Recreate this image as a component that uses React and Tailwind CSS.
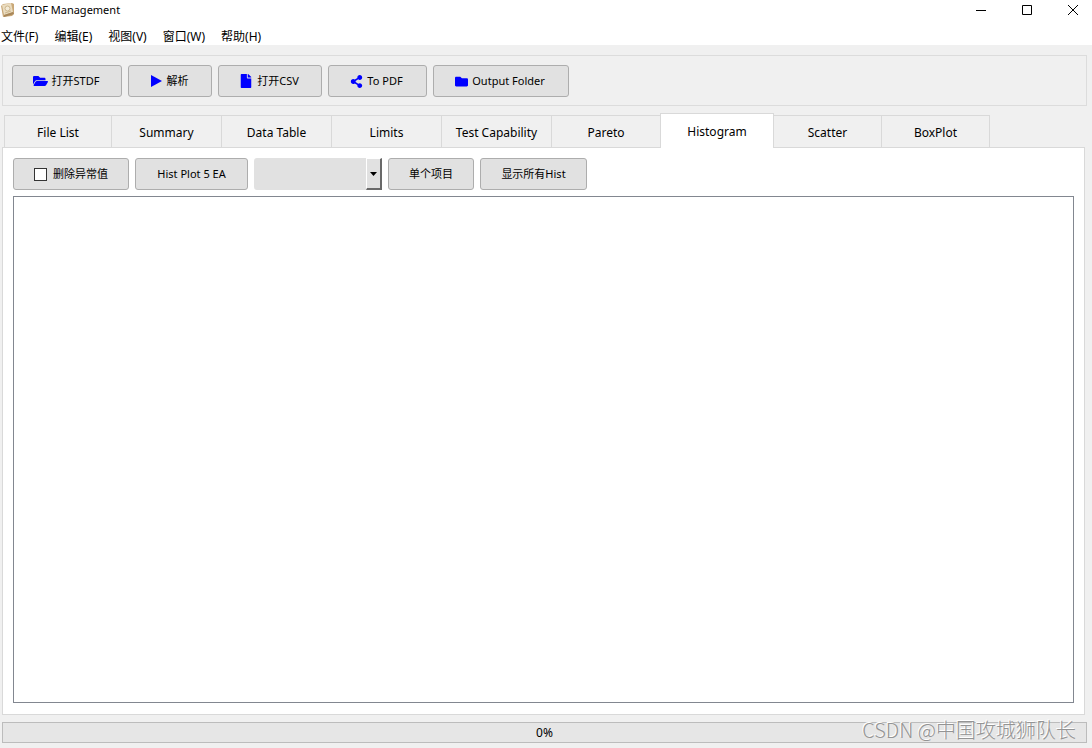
import { useState } from 'react';
import { FaFolderOpen, FaFile, FaShareAlt, FaFolder } from 'react-icons/fa';

const MENUS = ['文件(F)', '编辑(E)', '视图(V)', '窗口(W)', '帮助(H)'];

function PlayIcon({ className }) {
  return (
    <svg viewBox="0 0 13 12" className={className} aria-hidden="true">
      <path d="M1 0 12 6 1 12z" fill="currentColor" />
    </svg>
  );
}

const ACTIONS = [
  { label: '打开STDF', icon: FaFolderOpen, width: 'w-[110px]', size: 'w-[15px] h-[14px]' },
  { label: '解析', icon: PlayIcon, width: 'w-[84px]', size: 'w-[13px] h-3' },
  { label: '打开CSV', icon: FaFile, width: 'w-[104px]', size: 'w-[14px] h-[14px]' },
  { label: 'To PDF', icon: FaShareAlt, width: 'w-[99px]', size: 'w-[13px] h-[13px]' },
  { label: 'Output Folder', icon: FaFolder, width: 'w-[136px]', size: 'w-[13px] h-[13px]' },
];

const TABS = [
  { label: 'File List', width: 'w-[108px]' },
  { label: 'Summary', width: 'w-[110px]' },
  { label: 'Data Table', width: 'w-[110px]' },
  { label: 'Limits', width: 'w-[110px]' },
  { label: 'Test Capability', width: 'w-[110px]' },
  { label: 'Pareto', width: 'w-[108px]' },
  { label: 'Histogram', width: 'w-[114px]' },
  { label: 'Scatter', width: 'w-[108px]' },
  { label: 'BoxPlot', width: 'w-[108px]' },
];

const BUTTON = 'flex h-8 shrink-0 items-center justify-center whitespace-nowrap rounded-[3px] border border-[#adadad] bg-[#e1e1e1] text-[11px]';

function AppIcon() {
  return (
    <svg viewBox="0 0 16 16" className="h-4 w-4" aria-hidden="true">
      <path d="M3 15 1 4l2-2 9-1 2 1v10l-2 2z" fill="#c9a878" />
      <path d="M2 3 11 1l2 9-9 3z" fill="#eadcc0" />
      <path d="m4 13 9-3 1 2-10 3z" fill="#a8875a" />
      <circle cx="7.500" cy="6.500" r="2.500" fill="#f3ead6" stroke="#cdb78d" strokeWidth="1" />
      <path d="m5 11 6-2" stroke="#cdb78d" />
    </svg>
  );
}

function TitleBar() {
  return (
    <header className="flex h-5 items-center justify-between bg-white">
      <div className="flex items-center gap-[6px]">
        <AppIcon />
        <h1 className="text-[11px]">STDF Management</h1>
      </div>
      <div className="flex items-center gap-2 pb-px">
        <button aria-label="Minimize" className="flex h-[19px] w-[38px] items-center justify-center">
          <svg viewBox="0 0 10 10" className="h-[10px] w-[10px]"><path d="M0 5.500h10" stroke="#000" /></svg>
        </button>
        <button aria-label="Maximize" className="flex h-[19px] w-[38px] items-center justify-center">
          <svg viewBox="0 0 10 10" className="h-[10px] w-[10px]"><path d="M.5.5h9v9h-9z" fill="none" stroke="#000" /></svg>
        </button>
        <button aria-label="Close" className="flex h-[19px] w-[38px] items-center justify-center">
          <svg viewBox="0 0 10 10" className="h-[10px] w-[10px]"><path d="m0 0 10 10M10 0 0 10" stroke="#000" /></svg>
        </button>
      </div>
    </header>
  );
}

function MenuBar() {
  return (
    <nav className="flex h-[25px] items-center gap-4 bg-white pt-2 pl-px">
      {MENUS.map((menu) => (
        <button key={menu} className="text-xs">{menu}</button>
      ))}
    </nav>
  );
}

function Toolbar() {
  return (
    <div className="mt-[10px] mr-[5px] ml-[2px] flex gap-[6px] border border-[#dcdcdc] px-[9px] pt-[9px] pb-2">
      {ACTIONS.map(({ label, icon: Icon, width, size }) => (
        <button key={label} className={`${BUTTON} ${width} gap-1 pr-[2px]`}>
          <Icon className={`${size} text-[#0000ff]`} />
          <span>{label}</span>
        </button>
      ))}
    </div>
  );
}

function TabBar({ active, onSelect }) {
  const activeIndex = TABS.findIndex((tab) => tab.label === active);
  return (
    <div role="tablist" className="flex items-end pl-[2px] text-xs">
      {TABS.map(({ label, width }, i) => {
        const selected = i === activeIndex;
        let look = 'h-8 border-t border-r bg-[#f0f0f0] pt-[2px]';
        if (i === 0) look += ' border-l';
        if (i === activeIndex - 1) look = 'h-8 border-t bg-[#f0f0f0] pt-[2px]';
        if (selected) look = 'relative z-10 -mb-px h-[35px] border-x border-t bg-white pt-px';
        return (
          <button
            key={label}
            role="tab"
            aria-selected={selected}
            onClick={() => onSelect(label)}
            className={`${width} ${look} shrink-0 border-[#d9d9d9] whitespace-nowrap`}
          >
            {label}
          </button>
        );
      })}
    </div>
  );
}

function HistogramPanel() {
  return (
    <section role="tabpanel" className="flex flex-1 flex-col gap-[6px] border border-[#d9d9d9] bg-white px-[10px] pt-[10px] pb-[11px]">
      <div className="flex gap-[6px]">
        <label className={`${BUTTON} w-[116px] gap-[6px]`}>
          <input type="checkbox" className="h-[13px] w-[13px] appearance-none border border-[#333333] bg-white checked:bg-[#333333]" />
          删除异常值
        </label>
        <button className={`${BUTTON} w-[113px]`}>Hist Plot 5 EA</button>
        <div className="relative h-8 w-32 shrink-0">
          <select aria-label="测试项目" className="h-8 w-32 appearance-none rounded-[3px] bg-[#e1e1e1] px-2 text-[11px]">
            <option value=""></option>
          </select>
          <span className="pointer-events-none absolute top-0 right-0 flex h-8 w-4 items-center justify-center border-t border-r-2 border-b-2 border-l border-t-white border-r-[#696969] border-b-[#696969] border-l-white bg-[#e1e1e1]">
            <svg viewBox="0 0 7 4" className="h-1 w-[7px]"><path d="M0 0h7L3.500 4z" fill="#000" /></svg>
          </span>
        </div>
        <button className={`${BUTTON} w-[86px]`}>单个项目</button>
        <button className={`${BUTTON} w-[107px]`}>显示所有Hist</button>
      </div>
      <div className="flex-1 border border-[#828790] bg-white" />
    </section>
  );
}

export default function App() {
  const [tab, setTab] = useState('Histogram');

  return (
    <div className="relative flex min-h-screen flex-col bg-[#f0f0f0] font-['Noto_Sans','Noto_Sans_CJK_SC',sans-serif] text-black">
      <TitleBar />
      <MenuBar />
      <Toolbar />
      <main className="mt-[7px] mr-[7px] ml-[2px] flex flex-1 flex-col">
        <TabBar active={tab} onSelect={setTab} />
        <HistogramPanel />
      </main>
      <div
        role="progressbar"
        aria-valuenow={0}
        aria-valuemin={0}
        aria-valuemax={100}
        className="mt-[7px] mr-[5px] mb-[5px] ml-[2px] flex h-[21px] items-center justify-center border border-[#bcbcbc] bg-[#e6e6e6] pt-px text-xs"
      >
        0%
      </div>
      <div className="pointer-events-none absolute right-4 bottom-1 font-['Noto_Sans_CJK_SC',sans-serif] text-xl font-light text-[#949494] [text-shadow:-1px_-1px_0_#ffffff]">
        CSDN @中国攻城狮队长
      </div>
    </div>
  );
}
